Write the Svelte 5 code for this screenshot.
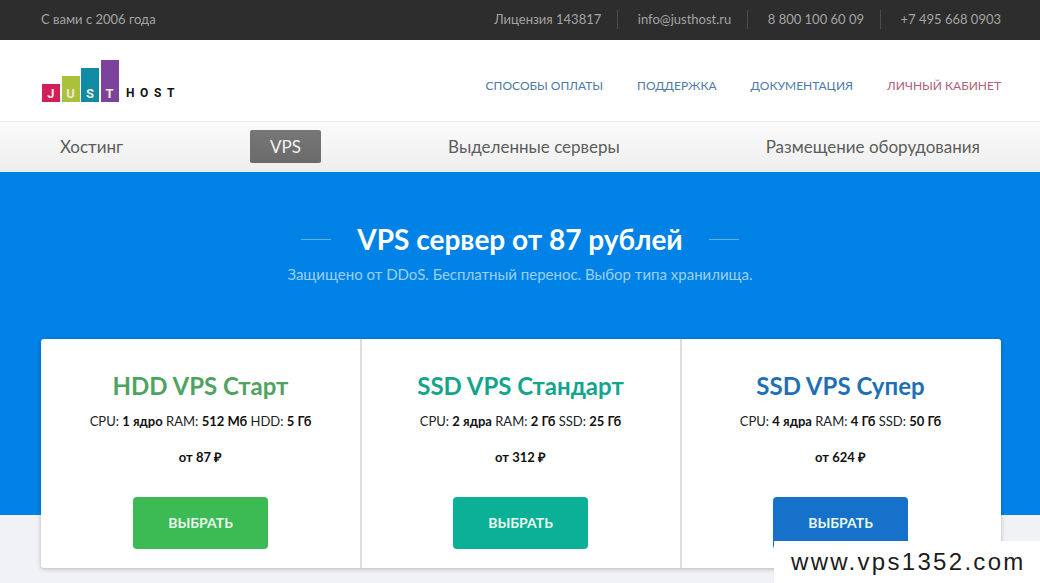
<script>
	const topLinks = ['Лицензия 143817', 'info@justhost.ru', '8 800 100 60 09', '+7 495 668 0903'];
	const menu = [
		{ label: 'СПОСОБЫ ОПЛАТЫ' },
		{ label: 'ПОДДЕРЖКА' },
		{ label: 'ДОКУМЕНТАЦИЯ' },
		{ label: 'ЛИЧНЫЙ КАБИНЕТ', account: true }
	];
	const bars = [
		{ letter: 'J', color: '#d01f5c', height: 18 },
		{ letter: 'U', color: '#a9c23a', height: 26 },
		{ letter: 'S', color: '#0f8ba3', height: 34 },
		{ letter: 'T', color: '#7b439c', height: 42 }
	];
	const tabs = ['Хостинг', 'VPS', 'Выделенные серверы', 'Размещение оборудования'];
	const plans = [
		{ name: 'HDD VPS Старт', color: '#4da35f', btn: '#3cba54', cpu: '1 ядро', ram: '512 Мб', disk: 'HDD', size: '5 Гб', price: 87 },
		{ name: 'SSD VPS Стандарт', color: '#12a58c', btn: '#0bb096', cpu: '2 ядра', ram: '2 Гб', disk: 'SSD', size: '25 Гб', price: 312 },
		{ name: 'SSD VPS Супер', color: '#1f6fb5', btn: '#1571c9', cpu: '4 ядра', ram: '4 Гб', disk: 'SSD', size: '50 Гб', price: 624 }
	];
</script>

<div class="page">
	<div class="topbar">
		<span>С вами с 2006 года</span>
		<div class="contacts">
			{#each topLinks as link}
				<span class="contact">{link}</span>
			{/each}
		</div>
	</div>

	<header class="header">
		<div class="logo">
			{#each bars as bar}
				<span class="bar" style="background: {bar.color}; height: {bar.height}px">{bar.letter}</span>
			{/each}
			<span class="host">HOST</span>
		</div>
		<nav class="menu">
			{#each menu as item}
				<span class:account={item.account}>{item.label}</span>
			{/each}
		</nav>
	</header>

	<div class="tabs">
		{#each tabs as tab}
			<span class="tab" class:active={tab === 'VPS'}>{tab}</span>
		{/each}
	</div>

	<section class="hero">
		<div class="title">
			<i class="dash"></i>
			<h1>VPS сервер от 87 рублей</h1>
			<i class="dash"></i>
		</div>
		<p class="subtitle">Защищено от DDoS. Бесплатный перенос. Выбор типа хранилища.</p>
	</section>

	<section class="lower">
		<div class="cards">
			{#each plans as plan}
				<div class="card">
					<h2 style="color: {plan.color}">{plan.name}</h2>
					<p class="specs">CPU: <b>{plan.cpu}</b> RAM: <b>{plan.ram}</b> {plan.disk}: <b>{plan.size}</b></p>
					<p class="price">от {plan.price} ₽</p>
					<span class="choose" style="background: {plan.btn}">ВЫБРАТЬ</span>
				</div>
			{/each}
		</div>
	</section>

	<div class="watermark">www.vps1352.com</div>
</div>

<style>
	:global(body) {
		margin: 0;
		background: #f1f2f6;
	}

	.page {
		position: relative;
		width: 1040px;
		height: 583px;
		overflow: hidden;
		font-family: Lato, 'Open Sans', sans-serif;
	}

	.topbar {
		display: flex;
		align-items: center;
		justify-content: space-between;
		box-sizing: border-box;
		height: 40px;
		padding: 0 39px 2px 41px;
		background: #2d2d2d;
		color: #a4a4a4;
		font-size: 13px;
	}

	.contacts {
		display: flex;
	}

	.contact {
		padding: 0 15.5px 0 20px;
		border-right: 1px solid #4c4c4c;
		line-height: 19px;
	}

	.contact:last-child {
		padding-right: 0;
		border-right: none;
	}

	.header {
		display: flex;
		align-items: center;
		justify-content: space-between;
		box-sizing: border-box;
		height: 82px;
		padding: 0 39px 0 42px;
		background: #fff;
		border-bottom: 1px solid #ececec;
	}

	.logo {
		display: flex;
		align-items: flex-end;
		gap: 1.5px;
		height: 42px;
		margin-top: 1px;
	}

	.bar {
		display: flex;
		align-items: flex-end;
		justify-content: center;
		width: 18px;
		color: #f3e6d8;
		font: 700 13px/17px Roboto, sans-serif;
	}

	.host {
		margin-left: 6px;
		color: #111;
		font: 700 12px/17px Roboto, sans-serif;
		letter-spacing: 5.6px;
	}

	.menu {
		display: flex;
		gap: 34px;
		margin-top: 9px;
		color: #4f7aa3;
		font-size: 12px;
	}

	.menu .account {
		color: #b0607c;
	}

	.tabs {
		display: flex;
		align-items: center;
		gap: 127px;
		box-sizing: border-box;
		height: 50px;
		padding: 0 60px 2px;
		background: linear-gradient(#fbfbfb, #eeeeee);
		color: #5c5c5c;
		font-size: 17px;
	}

	.tab {
		line-height: 33px;
	}

	.tab:last-child {
		margin-left: auto;
	}

	.tab.active {
		width: 71px;
		background: linear-gradient(#777, #6a6a6a);
		border-radius: 2px;
		color: #f2f2f2;
		text-align: center;
	}

	.hero {
		box-sizing: border-box;
		height: 343px;
		padding-top: 48px;
		background: #0082e6;
		color: #fff;
		text-align: center;
	}

	.title {
		display: flex;
		align-items: center;
		justify-content: center;
		gap: 26px;
	}

	.dash {
		width: 30px;
		height: 1px;
		background: #62b4f0;
	}

	h1 {
		margin: 0;
		font-size: 28px;
		font-weight: 700;
		line-height: 38px;
	}

	.subtitle {
		margin: 5px 0 0;
		color: #9dd0f5;
		font-size: 15px;
		line-height: 22px;
	}

	.lower {
		height: 68px;
	}

	.cards {
		display: grid;
		grid-template-columns: repeat(3, 320px);
		width: 960px;
		height: 229px;
		margin: -176px 0 0 41px;
		position: relative;
		background: #fff;
		border-radius: 3px;
		box-shadow: 0 1px 4px rgba(0, 0, 0, 0.25);
	}

	.card {
		display: flex;
		flex-direction: column;
		align-items: center;
		border-right: 1px solid #dcdcdc;
		box-shadow: 1px 0 0 #dcdcdc;
	}

	.card:last-child {
		border-right-color: transparent;
		box-shadow: none;
	}

	h2 {
		margin: 30px 0 0;
		font-size: 24px;
		font-weight: 700;
		line-height: 34px;
	}

	.specs {
		margin: 8px 0 0;
		color: #222;
		font-size: 13px;
		line-height: 20px;
	}

	.specs b {
		color: #111;
		font-weight: 700;
	}

	.price {
		margin: 16px 0 0;
		color: #111;
		font-size: 13px;
		font-weight: 700;
		line-height: 20px;
	}

	.choose {
		width: 135px;
		margin-top: 30px;
		border-radius: 4px;
		color: #e8f7ec;
		font-size: 14px;
		font-weight: 700;
		line-height: 52px;
		text-align: center;
	}

	/* stamped over the corner of the shot */
	.watermark {
		position: absolute;
		right: 0;
		bottom: 0;
		box-sizing: border-box;
		width: 266px;
		height: 42px;
		padding: 7px 0 0 17px;
		background: #fff;
		color: #1c1c1c;
		font: 24px/28px 'Liberation Sans', sans-serif;
		letter-spacing: 2.3px;
	}
</style>
